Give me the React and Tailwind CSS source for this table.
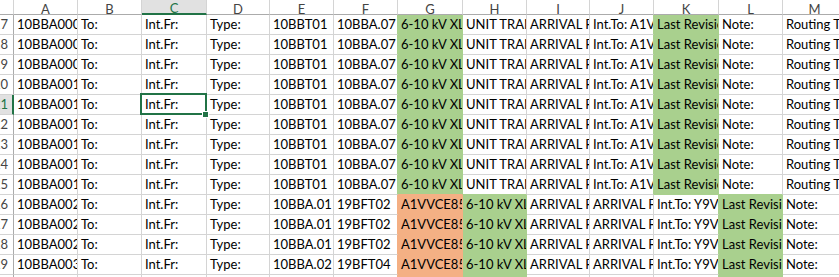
import React from "react";

const cols = ["A","B","C","D","E","F","G","H","I","J","K","L","M"];
const widths = ["w-[64px]","w-[64px]","w-[65px]","w-[63px]","w-[64px]","w-[64px]","w-[65px]","w-[64px]","w-[63px]","w-[64px]","w-[65px]","w-[64px]","w-[64px]"];

const G = "g", O = "o";
const fillBg = { g: "bg-[#a9d08e]", o: "bg-[#f4b084]" };
const rightBorder = { g: "border-r-[#a9d08e]", o: "border-r-[#f4b084]", n: "border-r-[#d4d4d4]" };
const bottomBorder = { g: "border-b-[#a9d08e]", o: "border-b-[#f4b084]", n: "border-b-[#d4d4d4]" };

const top = (a) => [a, "To:", "Int.Fr:", "Type:", "10BBT01", "10BBA.07", "6-10 kV XLPE", "UNIT TRANSFORMER", "ARRIVAL FROM", "Int.To: A1VVCE85", "Last Revision", "Note:", "Routing To"];
const topFill = [null,null,null,null,null,null,G,null,null,null,G,null,null];
const bot = (a, e, f) => [a, "To:", "Int.Fr:", "Type:", e, f, "A1VVCE85", "6-10 kV XLPE", "ARRIVAL FROM", "ARRIVAL FROM", "Int.To: Y9VVCE", "Last Revision", "Note:"];
const botFill = [null,null,null,null,null,null,O,G,null,null,null,G,null];

const rows = [
  { n: 17, c: top("10BBA0007"), f: topFill },
  { n: 18, c: top("10BBA0008"), f: topFill },
  { n: 19, c: top("10BBA0009"), f: topFill },
  { n: 20, c: top("10BBA0010"), f: topFill },
  { n: 21, c: top("10BBA0011"), f: topFill },
  { n: 22, c: top("10BBA0012"), f: topFill },
  { n: 23, c: top("10BBA0013"), f: topFill },
  { n: 24, c: top("10BBA0014"), f: topFill },
  { n: 25, c: top("10BBA0015"), f: topFill },
  { n: 26, c: bot("10BBA0026", "10BBA.01", "19BFT02"), f: botFill },
  { n: 27, c: bot("10BBA0027", "10BBA.01", "19BFT02"), f: botFill },
  { n: 28, c: bot("10BBA0028", "10BBA.01", "19BFT02"), f: botFill },
  { n: 29, c: bot("10BBA0039", "10BBA.02", "19BFT04"), f: botFill },
  { n: 30, c: bot("10BBA0040", "10BBA.02", "19BFT04"), f: botFill },
];

const SEL_ROW = 4;
const SEL_COL = 2;

export default function App() {
  return (
    <div className="relative w-[839px] h-[277px] overflow-hidden bg-white" style={{ fontFamily: "Lato, 'Open Sans', sans-serif" }}>
      {/* column headers */}
      <div className="flex h-[15px]">
        <div className="w-[14px] shrink-0 h-[15px] border-r border-b border-r-[#d4d4d4] border-b-[#ababab] bg-white" />
        {cols.map((c, i) => (
          <div
            key={c}
            className={`${widths[i]} shrink-0 h-[15px] overflow-hidden flex items-end justify-center border-r border-r-[#d4d4d4] ${i === SEL_COL ? "bg-[#e1e1e1] border-b-2 border-b-[#217346] text-[#217346]" : "bg-white border-b border-b-[#ababab] text-[#444444]"}`}
          >
            <span className="block h-[20px] leading-[20px] text-[13px] translate-y-[5px]">{c}</span>
          </div>
        ))}
      </div>
      {rows.map((r, ri) => {
        const next = rows[ri + 1];
        return (
          <div key={r.n} className="flex h-[20px]">
            <div
              className={`w-[14px] shrink-0 h-[20px] overflow-hidden flex justify-end items-end border-b border-b-[#d4d4d4] ${ri === SEL_ROW ? "bg-[#e1e1e1] border-r-2 border-r-[#217346] text-[#217346] pr-[4px]" : "bg-white border-r border-r-[#ababab] text-[#444444] pr-[5px]"}`}
            >
              <span className="block shrink-0 leading-[19px] text-[13px] whitespace-nowrap">{r.n}</span>
            </div>
            {r.c.map((t, ci) => {
              const own = r.f[ci];
              const rightN = r.f[ci + 1];
              const belowN = next ? next.f[ci] : null;
              const rb = own || rightN || "n";
              const bb = belowN || own || "n";
              return (
                <div
                  key={ci}
                  className={`${widths[ci]} shrink-0 h-[20px] overflow-hidden border-r border-b ${rightBorder[rb]} ${bottomBorder[bb]} ${own ? fillBg[own] : "bg-white"} pl-[3px] text-black`}
                >
                  <span className="block whitespace-nowrap leading-[19px] text-[13px]">{t}</span>
                </div>
              );
            })}
          </div>
        );
      })}
      {/* selection box */}
      <div className="absolute left-[140px] top-[93px] w-[67px] h-[22px] border-2 border-[#217346] pointer-events-none" />
      <div className="absolute left-[202px] top-[111px] w-[7px] h-[7px] bg-[#217346] border border-white" />
    </div>
  );
}
